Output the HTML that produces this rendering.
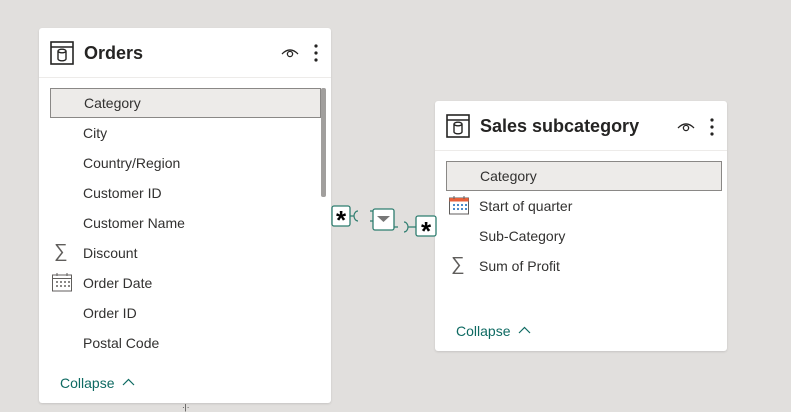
<!DOCTYPE html>
<html><head><style>
*{margin:0;padding:0;box-sizing:border-box}
body{width:791px;height:409px;background:#e1dfdd;position:relative;overflow:hidden;font-family:"Liberation Sans",sans-serif;color:#323130}
.card{position:absolute;background:#fff;border-radius:3px;box-shadow:0 1px 2px rgba(0,0,0,.12)}
.hdr{position:absolute;left:0;right:0;top:0;border-bottom:1px solid #edebe9}
.title{position:absolute;font-weight:bold;font-size:18px;color:#252423}
.row{position:absolute;font-size:14px;height:30px;line-height:30px}
.sel{background:#edebe9;border:1px solid #8a8886}
.col{position:absolute;font-size:14px;color:#0e6a62}
.sig{position:absolute;font-size:19px;color:#605e5c}
</style></head><body>

<svg width="0" height="0" style="position:absolute"><defs>
<g id="tbl"><rect x="1" y="1" width="22" height="22" fill="none" stroke="#252423" stroke-width="1.6"/><line x1="1" y1="6" x2="23" y2="6" stroke="#252423" stroke-width="1.6"/><path d="M8 10 v8 a4 1.8 0 0 0 8 0 v-8 a4 1.8 0 0 0 -8 0 a4 1.8 0 0 0 8 0" fill="none" stroke="#252423" stroke-width="1.4"/></g>
<g id="eye"><path d="M1 9 Q9 1 17 9" fill="none" stroke="#252423" stroke-width="1.3"/><circle cx="9" cy="9" r="2.6" fill="none" stroke="#252423" stroke-width="1.3"/></g>
<g id="dots"><circle cx="2" cy="2" r="1.6" fill="#252423"/><circle cx="2" cy="9" r="1.6" fill="#252423"/><circle cx="2" cy="16" r="1.6" fill="#252423"/></g>
<g id="cal"><rect x="0.5" y="2" width="19" height="16" fill="#fff" stroke="#605e5c"/><line x1="0.5" y1="5.5" x2="19.5" y2="5.5" stroke="#605e5c"/><line x1="5" y1="0" x2="5" y2="3" stroke="#605e5c"/><line x1="15" y1="0" x2="15" y2="3" stroke="#605e5c"/><g fill="#8a8886"><rect x="4" y="8" width="2" height="2"/><rect x="8" y="8" width="2" height="2"/><rect x="12" y="8" width="2" height="2"/><rect x="4" y="12" width="2" height="2"/><rect x="8" y="12" width="2" height="2"/><rect x="12" y="12" width="2" height="2"/><rect x="16" y="8" width="2" height="2"/><rect x="16" y="12" width="2" height="2"/></g></g>
<g id="cal2"><rect x="0.5" y="2" width="19" height="16" fill="#fff" stroke="#605e5c"/><rect x="0.5" y="2" width="19" height="3.5" fill="#e8613b"/><line x1="5" y1="0" x2="5" y2="3" stroke="#605e5c"/><line x1="15" y1="0" x2="15" y2="3" stroke="#605e5c"/><g fill="#4a89c8"><rect x="4" y="8" width="2" height="2"/><rect x="8" y="8" width="2" height="2"/><rect x="12" y="8" width="2" height="2"/><rect x="4" y="12" width="2" height="2"/><rect x="8" y="12" width="2" height="2"/><rect x="12" y="12" width="2" height="2"/><rect x="16" y="8" width="2" height="2"/><rect x="16" y="12" width="2" height="2"/></g></g>
<g id="chev"><path d="M1 7 L6.5 1.5 L12 7" fill="none" stroke="#0e6a62" stroke-width="1.2"/></g>
</defs></svg>

<div class="card" style="left:39px;top:28px;width:292px;height:375px">
<div class="hdr" style="height:50px"></div>
<svg style="position:absolute;left:11px;top:13px" width="26" height="26"><use href="#tbl"/></svg>
<div class="title" style="left:45px;top:15px">Orders</div>
<svg style="position:absolute;left:242px;top:17px" width="20" height="14"><use href="#eye"/></svg>
<svg style="position:absolute;left:275px;top:16px" width="5" height="20"><use href="#dots"/></svg>
<div class="row sel" style="left:11px;top:60px;width:271px;padding-left:33px;line-height:28px">Category</div>
<div style="position:absolute;left:282px;top:60px;width:5px;height:109px;background:#a19f9d;border-radius:2px"></div>
<div class="row" style="left:44px;top:90px">City</div>
<div class="row" style="left:44px;top:120px">Country/Region</div>
<div class="row" style="left:44px;top:150px">Customer ID</div>
<div class="row" style="left:44px;top:180px">Customer Name</div>
<div class="sig" style="left:15px;top:213px">∑</div>
<div class="row" style="left:44px;top:210px">Discount</div>
<svg style="position:absolute;left:13px;top:245px" width="21" height="19"><use href="#cal"/></svg>
<div class="row" style="left:44px;top:240px">Order Date</div>
<div class="row" style="left:44px;top:270px">Order ID</div>
<div class="row" style="left:44px;top:300px">Postal Code</div>
<div class="col" style="left:21px;top:347px">Collapse</div>
<svg style="position:absolute;left:83px;top:350px" width="14" height="9"><use href="#chev"/></svg>
</div>

<div class="card" style="left:435px;top:101px;width:292px;height:250px">
<div class="hdr" style="height:50px"></div>
<svg style="position:absolute;left:11px;top:13px" width="26" height="26"><use href="#tbl"/></svg>
<div class="title" style="left:45px;top:15px">Sales subcategory</div>
<svg style="position:absolute;left:242px;top:18px" width="20" height="14"><use href="#eye"/></svg>
<svg style="position:absolute;left:275px;top:17px" width="5" height="20"><use href="#dots"/></svg>
<div class="row sel" style="left:11px;top:60px;width:276px;padding-left:33px;line-height:28px">Category</div>
<svg style="position:absolute;left:14px;top:95px" width="21" height="19"><use href="#cal2"/></svg>
<div class="row" style="left:44px;top:90px">Start of quarter</div>
<div class="row" style="left:44px;top:120px">Sub-Category</div>
<div class="sig" style="left:16px;top:153px">∑</div>
<div class="row" style="left:44px;top:150px">Sum of Profit</div>
<div class="col" style="left:21px;top:222px">Collapse</div>
<svg style="position:absolute;left:83px;top:225px" width="14" height="9"><use href="#chev"/></svg>
</div>

<svg style="position:absolute;left:330px;top:200px" width="110" height="40">
<rect x="2" y="6" width="18" height="20" rx="2" fill="#fff" stroke="#2e7d6f" stroke-width="1.3"/>
<text x="11" y="29" font-size="26" font-weight="bold" text-anchor="middle" font-family="Liberation Sans" fill="#000">*</text>
<path d="M20 16 h4 M28 11 a4 5 0 0 0 0 10" fill="none" stroke="#2e7d6f" stroke-width="1.2"/>
<path d="M40 11 h3 M40 21 h3" stroke="#2e7d6f" stroke-width="1.2"/>
<rect x="43" y="9" width="21" height="21" rx="2" fill="#fff" stroke="#2e7d6f" stroke-width="1.3"/>
<path d="M47 16 h13 l-6.5 6 z" fill="#777"/>
<path d="M64 27 h4 M74 22 a4 5 0 0 1 0 10 M78 27 h8" fill="none" stroke="#2e7d6f" stroke-width="1.2"/>
<rect x="86" y="16" width="20" height="20" rx="2" fill="#fff" stroke="#2e7d6f" stroke-width="1.3"/>
<text x="96" y="40" font-size="26" font-weight="bold" text-anchor="middle" font-family="Liberation Sans" fill="#000">*</text>
</svg>
<div style="position:absolute;left:182px;top:403px;font-size:8px">·|·</div>
</body></html>
